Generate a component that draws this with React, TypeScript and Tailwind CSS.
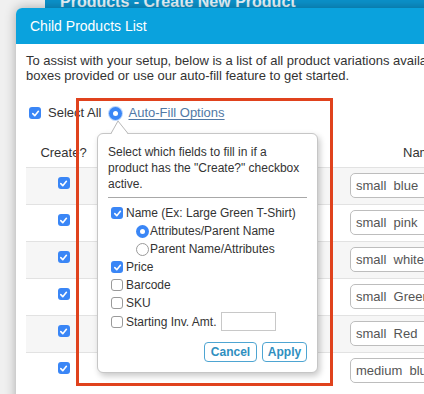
import React from "react";

const font = { fontFamily: '"Liberation Sans", Arial, sans-serif' };

const Check = ({ checked = true }: { checked?: boolean }) =>
  checked ? (
    <span className="w-[12px] h-[12px] rounded-[3px] bg-[#3a86f6] flex items-center justify-center shrink-0">
      <svg width="9" height="9" viewBox="0 0 10 10">
        <path d="M2 5.2 L4.2 7.4 L8.2 2.6" fill="none" stroke="white" strokeWidth="1.8" strokeLinecap="round" strokeLinejoin="round" />
      </svg>
    </span>
  ) : (
    <span className="w-[12px] h-[12px] rounded-[3px] bg-white border border-[#9a9a9a] shrink-0" />
  );

const Radio = ({ checked = false }: { checked?: boolean }) =>
  checked ? (
    <span className="w-[13px] h-[13px] rounded-full bg-[#3a86f6] flex items-center justify-center shrink-0">
      <span className="w-[5px] h-[5px] rounded-full bg-white" />
    </span>
  ) : (
    <span className="w-[13px] h-[13px] rounded-full bg-white border border-[#9a9a9a] shrink-0" />
  );

const rows = [
  { name: "small  blue  /", bg: "bg-[#f6f6f6]" },
  { name: "small  pink  /", bg: "bg-white" },
  { name: "small  white  /", bg: "bg-[#f6f6f6]" },
  { name: "small  Green  /", bg: "bg-white" },
  { name: "small  Red  /", bg: "bg-[#f6f6f6]" },
  { name: "medium  blue  /", bg: "bg-white" },
];

export default function App() {
  return (
    <div className="relative w-[424px] h-[394px] overflow-hidden bg-[#f0f0f0]" style={font}>
      {/* page header behind the modal */}
      <div className="absolute left-[45px] top-0 right-0 h-[40px] bg-[#0b93cc]">
        <div className="pl-[15px] -mt-[10px] text-[16px] font-bold text-white/90 whitespace-nowrap">
          Products - Create New Product
        </div>
      </div>

      {/* modal */}
      <div className="absolute left-[16px] top-[8px] w-[430px] h-[400px] bg-white rounded-tl-[6px] shadow-[0_0_12px_rgba(0,0,0,0.3)] overflow-hidden">
        <div className="h-[36px] bg-[#0aa2dd] flex items-center pl-[14px] text-[14px] text-white">
          Child Products List
        </div>
        <div className="pl-[10px] pt-[9px]">
          <p className="text-[13px] leading-[15px] text-[#333] whitespace-nowrap">
            To assist with your setup, below is a list of all product variations available
            <br />
            boxes provided or use our auto-fill feature to get started.
          </p>

          <div className="mt-[22px] h-[16px] flex items-center pl-[3px] text-[13px] text-[#333]">
            <Check />
            <span className="ml-[7px]">Select All</span>
            <span className="ml-[8px] w-[13px] h-[13px] rounded-full bg-[#3a86f6] flex items-center justify-center shadow-[0_0_0_1px_rgba(58,134,246,0.35)]">
              <span className="w-[5px] h-[5px] rounded-full bg-white" />
            </span>
            <span className="ml-[6px] text-[#5179a6] underline underline-offset-2">Auto-Fill Options</span>
          </div>

          <div className="mt-[9px] w-[500px]">
            <div className="h-[37px] flex pt-[13px] text-[13px] text-[#333]">
              <div className="w-[75px] text-center">Create?</div>
              <div className="ml-[302px]">Name</div>
            </div>
            {rows.map((r, i) => (
              <div key={i} className={`h-[37px] flex border-t border-[#e2e2e2] ${r.bg}`}>
                <div className="w-[75px] flex justify-center pt-[9px]">
                  <Check />
                </div>
                <div className="ml-[249px] mt-[5px] h-[25px] w-[120px] bg-white border border-[#bdbdbd] rounded-[5px] flex items-center px-[5px] text-[13px] text-[#555] whitespace-pre">
                  {r.name}
                </div>
              </div>
            ))}
          </div>
        </div>
      </div>

      {/* auto-fill popover */}
      <div className="absolute left-[97px] top-[133px] w-[221px] h-[240px] bg-white border border-[#c6c6c6] rounded-[6px] shadow-[2px_3px_6px_rgba(0,0,0,0.22)] px-[10px] pt-[10px] text-[12px] text-[#333]">
        <p className="leading-[16px]">
          Select which fields to fill in if a
          <br />
          product has the "Create?" checkbox
          <br />
          active.
        </p>
        <div className="mt-[5px] border-t border-[#a8a8a8]" />
        <div className="mt-[6px] flex flex-col">
          <div className="h-[18px] flex items-center pl-[3px] gap-[3px]">
            <Check />
            <span>Name (Ex: Large Green T-Shirt)</span>
          </div>
          <div className="h-[18px] flex items-center pl-[28px] gap-[1px]">
            <Radio checked />
            <span>Attributes/Parent Name</span>
          </div>
          <div className="h-[18px] flex items-center pl-[28px] gap-[1px]">
            <Radio />
            <span>Parent Name/Attributes</span>
          </div>
          <div className="h-[18px] flex items-center pl-[3px] gap-[3px]">
            <Check />
            <span>Price</span>
          </div>
          <div className="h-[18px] flex items-center pl-[3px] gap-[3px]">
            <Check checked={false} />
            <span>Barcode</span>
          </div>
          <div className="h-[18px] flex items-center pl-[3px] gap-[3px]">
            <Check checked={false} />
            <span>SKU</span>
          </div>
          <div className="h-[19px] flex items-center pl-[3px] gap-[3px]">
            <Check checked={false} />
            <span>Starting Inv. Amt.</span>
            <span className="ml-[2px] w-[55px] h-[19px] border border-[#c8c8c8] bg-white" />
          </div>
        </div>
        <div className="mt-[11px] flex justify-end gap-[5px]">
          <button className="w-[53px] h-[20px] border border-[#4ea5d2] rounded-[4px] text-[12px] font-bold text-[#2f8fc0] flex items-center justify-center">
            Cancel
          </button>
          <button className="w-[45px] h-[20px] border border-[#4ea5d2] rounded-[4px] text-[12px] font-bold text-[#2f8fc0] flex items-center justify-center">
            Apply
          </button>
        </div>
      </div>
      {/* popover arrow */}
      <svg className="absolute left-[108px] top-[119px]" width="24" height="16" viewBox="0 0 24 16">
        <polygon points="10,2 3,15.5 20,15.5" fill="white" />
        <path d="M3 14.5 L10 2 L20 14.5" fill="none" stroke="#b8b8b8" strokeWidth="1" />
      </svg>

      {/* annotation box */}
      <div className="absolute left-[76px] top-[98px] w-[257px] h-[288px] border-[3px] border-[#e0421d]" />
    </div>
  );
}
